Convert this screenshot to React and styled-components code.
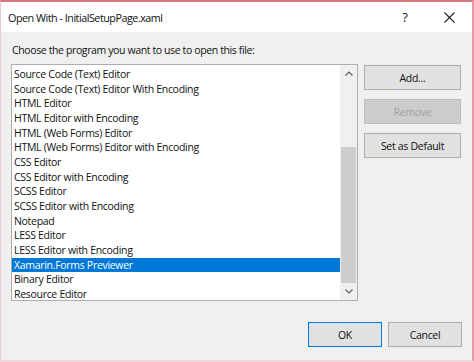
import React from 'react';
import styled, { createGlobalStyle } from 'styled-components';

const GlobalStyle = createGlobalStyle`
  html, body {
    margin: 0;
    padding: 0;
    background: #ffffff;
  }
  body {
    font-family: "Open Sans", "Noto Sans", sans-serif;
  }
`;

const programs = [
  'Source Code (Text) Editor',
  'Source Code (Text) Editor With Encoding',
  'HTML Editor',
  'HTML Editor with Encoding',
  'HTML (Web Forms) Editor',
  'HTML (Web Forms) Editor with Encoding',
  'CSS Editor',
  'CSS Editor with Encoding',
  'SCSS Editor',
  'SCSS Editor with Encoding',
  'Notepad',
  'LESS Editor',
  'LESS Editor with Encoding',
  'Xamarin.Forms Previewer',
  'Binary Editor',
  'Resource Editor',
];

export default function App() {
  const selected = 'Xamarin.Forms Previewer';

  return (
    <>
      <GlobalStyle />
      <Window>
        <TitleBar>
          <Title>Open With - InitialSetupPage.xaml</Title>
          <TitleButtons>
            <HelpMark>?</HelpMark>
            <CloseMark>
              <svg width="11" height="11" viewBox="0 0 11 11">
                <path d="M0.5 0.5 L10.5 10.5 M10.5 0.5 L0.5 10.5" stroke="#222" strokeWidth="1.1" fill="none" />
              </svg>
            </CloseMark>
          </TitleButtons>
        </TitleBar>
        <Body>
          <Prompt>Choose the program you want to use to open this file:</Prompt>
          <MainRow>
            <ListBox>
              <Items>
                {programs.map(name => (
                  <Item key={name} selected={name === selected}>{name}</Item>
                ))}
              </Items>
              <ScrollBar>
                <Arrow>
                  <svg width="8" height="5" viewBox="0 0 8 5">
                    <path d="M0.5 4.5 L4 1 L7.5 4.5" stroke="#606060" strokeWidth="1.2" fill="none" />
                  </svg>
                </Arrow>
                <Track>
                  <Thumb />
                </Track>
                <Arrow>
                  <svg width="8" height="5" viewBox="0 0 8 5">
                    <path d="M0.5 0.5 L4 4 L7.5 0.5" stroke="#606060" strokeWidth="1.2" fill="none" />
                  </svg>
                </Arrow>
              </ScrollBar>
            </ListBox>
            <SideButtons>
              <Button>Add...</Button>
              <Button disabled>Remove</Button>
              <Button>Set as Default</Button>
            </SideButtons>
          </MainRow>
          <Footer>
            <Button primary narrow>OK</Button>
            <Button narrow>Cancel</Button>
          </Footer>
        </Body>
      </Window>
    </>
  );
}

const Window = styled.div`
  width: 474px;
  height: 362px;
  box-sizing: border-box;
  border-top: 2px solid #d9737e;
  border-right: 2px solid #e59aa3;
  border-left: 1px solid #f2c9ce;
  border-bottom: 2px solid #f4d6da;
  display: flex;
  flex-direction: column;
  background: #f0f0f0;
  overflow: hidden;
`;

const TitleBar = styled.div`
  height: 30px;
  background: #ffffff;
  display: flex;
  align-items: center;
  justify-content: space-between;
  padding: 0 0 0 7px;
  flex-shrink: 0;
`;

const Title = styled.div`
  font-size: 10.8px;
  color: #111;
  letter-spacing: -0.5px;
`;

const TitleButtons = styled.div`
  display: flex;
  align-items: center;
`;

const HelpMark = styled.div`
  width: 46px;
  text-align: center;
  font-size: 13px;
  color: #222;
`;

const CloseMark = styled.div`
  width: 42px;
  display: flex;
  justify-content: center;
  align-items: center;
  padding-right: 2px;
`;

const Body = styled.div`
  flex: 1;
  display: flex;
  flex-direction: column;
  padding: 10px 10px 0 10px;
`;

const Prompt = styled.div`
  font-size: 10.5px;
  color: #111;
  line-height: 16px;
  height: 16px;
  padding-left: 1px;
  letter-spacing: -0.38px;
`;

const MainRow = styled.div`
  display: flex;
  margin-top: 6px;
  gap: 6px;
`;

const ListBox = styled.div`
  width: 347px;
  height: 237px;
  box-sizing: border-box;
  border: 1px solid #abadb3;
  background: #ffffff;
  display: flex;
`;

const Items = styled.div`
  flex: 1;
  padding-top: 2px;
`;

const Item = styled.div`
  height: 14.67px;
  line-height: 14.67px;
  font-size: 10.5px;
  letter-spacing: -0.3px;
  padding-left: 2px;
  white-space: nowrap;
  color: ${p => (p.selected ? '#ffffff' : '#111')};
  background: ${p => (p.selected ? '#0078d7' : 'transparent')};
`;

const ScrollBar = styled.div`
  width: 17px;
  background: #f0f0f0;
  display: flex;
  flex-direction: column;
`;

const Arrow = styled.div`
  height: 17px;
  display: flex;
  align-items: center;
  justify-content: center;
`;

const Track = styled.div`
  flex: 1;
  display: flex;
  flex-direction: column;
  justify-content: flex-end;
  padding: 0 1px;
`;

const Thumb = styled.div`
  height: 136px;
  background: #cdcdcd;
`;

const SideButtons = styled.div`
  display: flex;
  flex-direction: column;
  gap: 9px;
  width: 97px;
  padding-top: 1px;
`;

const Button = styled.button`
  height: 25px;
  width: ${p => (p.narrow ? '74px' : '97px')};
  box-sizing: border-box;
  font-family: "Open Sans", "Noto Sans", sans-serif;
  font-size: 10.5px;
  letter-spacing: -0.3px;
  background: ${p => (p.disabled ? '#cccccc' : '#e1e1e1')};
  color: ${p => (p.disabled ? '#a0a0a0' : '#111')};
  border: 1px solid ${p => (p.primary ? '#0078d7' : p.disabled ? '#bfbfbf' : '#adadad')};
  box-shadow: ${p => (p.primary ? 'inset 0 0 0 1px #cfe4f7' : 'none')};
  padding: 0;
`;

const Footer = styled.div`
  display: flex;
  justify-content: flex-end;
  gap: 6px;
  margin-top: 21px;
`;
